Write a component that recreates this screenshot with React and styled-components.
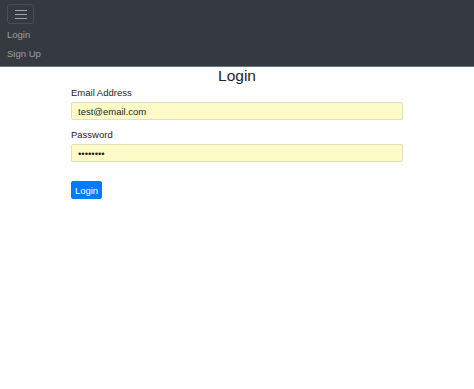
import React from 'react'
import styled, { createGlobalStyle } from 'styled-components'

const GlobalStyle = createGlobalStyle`
  body {
    margin: 0;
    font-family: "Liberation Sans", Arial, sans-serif;
    background: #fff;
    color: #212529;
  }
`

const Navbar = styled.nav`
  background: #343a40;
  height: 67px;
  border-bottom: 1px solid #6c757d;
  padding: 4px 7px 0;
  box-sizing: border-box;
`

const Toggler = styled.button`
  width: 27px;
  height: 20px;
  padding: 0;
  background: transparent;
  border: 1px solid rgba(255, 255, 255, 0.1);
  border-radius: 3px;
  display: flex;
  align-items: center;
  justify-content: center;
`

const NavLinks = styled.div`
  display: flex;
  flex-direction: column;
  padding-top: 1px;
`

const NavLink = styled.a`
  color: rgba(255, 255, 255, 0.5);
  font-size: 9.5px;
  line-height: 19px;
  text-decoration: none;
`

const Container = styled.div`
  width: 332px;
  margin: 0 auto;
`

const Title = styled.h1`
  font-size: 15.5px;
  font-weight: 400;
  text-align: center;
  margin: 0;
  line-height: 17px;
`

const Group = styled.div`
  margin-top: ${(p) => p.gap || 0}px;
`

const Label = styled.label`
  display: block;
  font-size: 9.5px;
  line-height: 11px;
  margin-bottom: 4px;
`

const Input = styled.input`
  display: block;
  width: 100%;
  box-sizing: border-box;
  height: 18px;
  padding: 0 6px;
  font-family: inherit;
  font-size: 9.5px;
  color: #212529;
  background: #fdfcc8;
  border: 1px solid #e2e0b8;
  border-radius: 2px;
  outline: none;
`

const Button = styled.button`
  margin-top: 19px;
  width: 31px;
  height: 18px;
  padding: 0;
  font-family: inherit;
  font-size: 9.5px;
  color: #fff;
  background: #007bff;
  border: 1px solid #007bff;
  border-radius: 2px;
`

const MenuIcon = () => (
  <svg width="14" height="11" viewBox="0 0 14 11">
    <path d="M1 1.5h12M1 5.5h12M1 9.5h12" stroke="rgba(255,255,255,0.55)" strokeWidth="1.2" />
  </svg>
)

export default function App() {
  return (
    <>
      <GlobalStyle />
      <Navbar>
        <Toggler>
          <MenuIcon />
        </Toggler>
        <NavLinks>
          <NavLink href="#">Login</NavLink>
          <NavLink href="#">Sign Up</NavLink>
        </NavLinks>
      </Navbar>
      <Container>
        <Title>Login</Title>
        <Group gap={3}>
          <Label>Email Address</Label>
          <Input type="email" defaultValue="test@email.com" />
        </Group>
        <Group gap={9}>
          <Label>Password</Label>
          <Input type="password" defaultValue="password" />
        </Group>
        <Button>Login</Button>
      </Container>
    </>
  )
}
